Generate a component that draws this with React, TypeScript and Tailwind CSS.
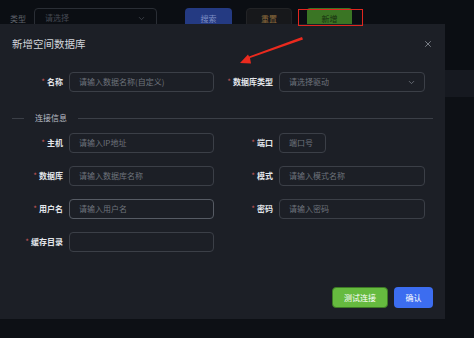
import { ChevronDown, X } from "lucide-react";

const font = { fontFamily: '"Noto Sans CJK SC", "Noto Sans", sans-serif' };

function Label({ text, w }: { text: string; w: string }) {
  return (
    <div className={`${w} shrink-0 text-right text-[8px] font-bold text-[#e3e6eb] pr-[6px]`}>
      <span className="text-[#c45656] mr-[2px] font-normal">*</span>
      {text}
    </div>
  );
}

function Input({ ph, w = "w-[145px]", hl = false }: { ph?: string; w?: string; hl?: boolean }) {
  return (
    <div
      className={`${w} h-[20px] rounded-[4px] border ${hl ? "border-[#565b64]" : "border-[#3b3f47]"} flex items-center pl-[9px] text-[8px] text-[#6e737c]`}
    >
      {ph}
    </div>
  );
}

function Row({ children }: { children: React.ReactNode }) {
  return <div className="flex items-center h-[20px]">{children}</div>;
}

export default function App() {
  return (
    <div style={font} className="relative w-[474px] h-[338px] overflow-hidden bg-[#0d1015]">
      {/* page behind */}
      <div className="h-[70px] bg-[#0b0e13] flex items-start pt-[8px]">
        <span className="ml-[10px] mt-[5px] w-[18px] text-[8px] text-[#5f636b]">类型</span>
        <div className="ml-[6px] w-[123px] h-[20px] rounded-[4px] border border-[#2a2e35] flex items-center justify-between px-[10px] text-[8px] text-[#454952]">
          请选择
          <ChevronDown size={9} className="text-[#454952]" />
        </div>
        <div className="ml-[28px] w-[47px] h-[21px] rounded-[4px] bg-[#243a82] flex items-center justify-center text-[8px] text-[#7f8fc4]">
          搜索
        </div>
        <div className="ml-[14px] w-[46px] h-[21px] rounded-[4px] bg-[#17181b] border border-[#222326] flex items-center justify-center text-[8px] text-[#8c6b3c]">
          重置
        </div>
        <div className="ml-[15px] w-[45px] h-[21px] rounded-[3px] bg-[#3a7524] flex items-center justify-center text-[8px] text-[#183010]">
          新增
        </div>
      </div>
      <div className="h-[27px] bg-[#161920]" />

      {/* dialog */}
      <div className="absolute left-0 top-[24px] w-[445px] h-[295px] bg-[#1c1f26]">
        <div className="flex items-center justify-between h-[38px] pl-[12px] pr-[12px] pt-[1px]">
          <span className="text-[10.5px] text-[#d2d5db]">新增空间数据库</span>
          <X size={10} className="text-[#8b9099]" />
        </div>

        <div className="mt-[10px]">
          <Row>
            <Label text="名称" w="w-[69px]" />
            <Input ph="请输入数据名称(自定义)" />
            <Label text="数据库类型" w="w-[65px]" />
            <div className="w-[146px] h-[20px] rounded-[4px] border border-[#3b3f47] flex items-center justify-between pl-[9px] pr-[8px] text-[8px] text-[#6e737c]">
              请选择驱动
              <ChevronDown size={9} className="text-[#7a7f88]" />
            </div>
          </Row>

          <div className="flex items-center mt-[21px] mb-[10px] h-[10px]">
            <div className="ml-[12px] w-[12px] h-px bg-[#3b3f47]" />
            <span className="mx-[11px] text-[8px] text-[#b8bcc4]">连接信息</span>
            <div className="w-[355px] h-px bg-[#3b3f47]" />
          </div>

          <div className="flex flex-col gap-[13px]">
            <Row>
              <Label text="主机" w="w-[69px]" />
              <Input ph="请输入IP地址" />
              <Label text="端口" w="w-[65px]" />
              <Input ph="端口号" w="w-[47px]" />
            </Row>
            <Row>
              <Label text="数据库" w="w-[69px]" />
              <Input ph="请输入数据库名称" />
              <Label text="模式" w="w-[65px]" />
              <Input ph="请输入模式名称" w="w-[146px]" />
            </Row>
            <Row>
              <Label text="用户名" w="w-[69px]" />
              <Input ph="请输入用户名" hl />
              <Label text="密码" w="w-[65px]" />
              <Input ph="请输入密码" w="w-[146px]" />
            </Row>
            <Row>
              <Label text="缓存目录" w="w-[69px]" />
              <Input />
            </Row>
          </div>
        </div>

        <div className="flex justify-end gap-[6px] pr-[12px] mt-[35px]">
          <div className="w-[56px] h-[21px] rounded-[4px] bg-[#66bb3f] border border-[#3d7a25] flex items-center justify-center text-[8px] text-white">
            测试连接
          </div>
          <div className="w-[39px] h-[21px] rounded-[4px] bg-[#3c6df0] flex items-center justify-center text-[8px] text-white">
            确认
          </div>
        </div>
      </div>

      {/* annotations */}
      <div className="absolute left-[298px] top-[9px] w-[65px] h-[17px] border-[1.5px] border-[#e0261f]" />
      <svg className="absolute left-0 top-0" width="474" height="338">
        <polygon points="302,37 303,39.5 250,58 251,63.5 240,63 248,54.5 249,56.5" fill="#ea2a1e" />
      </svg>
    </div>
  );
}
